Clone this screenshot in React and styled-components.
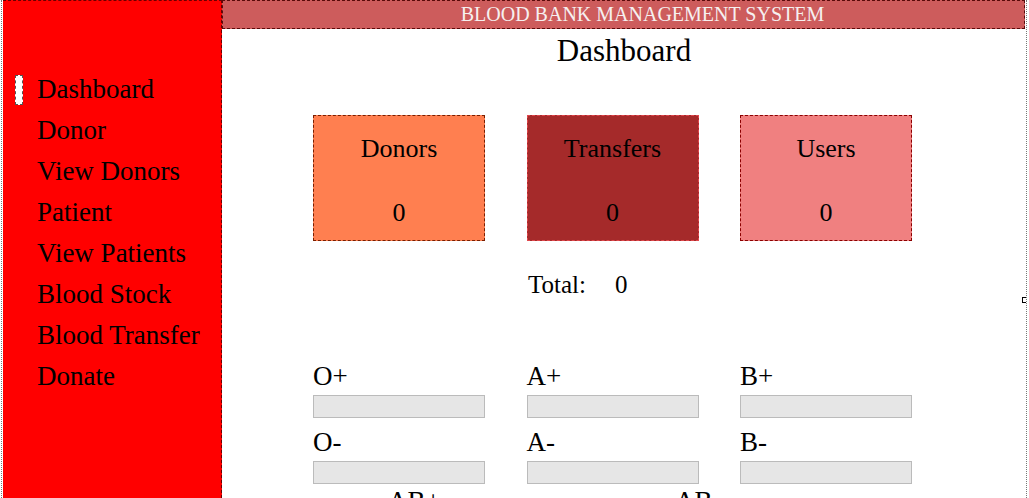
import React from "react"
import styled, { createGlobalStyle } from "styled-components"

const GlobalStyle = createGlobalStyle`
  html, body {
    margin: 0;
    overflow: hidden;
  }
  body {
    font-family: "Liberation Serif", "Times New Roman", serif;
    color: #000;
    background: #fff;
  }
`

const menu = [
  "Dashboard",
  "Donor",
  "View Donors",
  "Patient",
  "View Patients",
  "Blood Stock",
  "Blood Transfer",
  "Donate",
]

const stats = [
  { title: "Donors", value: 0, bg: "#ff7f50", line: "#7a1f00" },
  { title: "Transfers", value: 0, bg: "#a52a2a", line: "#e0474c" },
  { title: "Users", value: 0, bg: "#f08080", line: "#8b0000" },
]

const groups = [
  ["O+", "A+", "B+"],
  ["O-", "A-", "B-"],
]

const Page = styled.div`
  position: relative;
  display: flex;
  box-sizing: border-box;
  width: 1026px;
  height: 100vh;
  margin-left: 1px;
  border-left: 1px dotted #777;
  border-right: 1px dotted #777;
  overflow: hidden;
`

const Sidebar = styled.nav`
  box-sizing: border-box;
  width: 219px;
  flex-shrink: 0;
  margin-left: 1px;
  padding-top: 68px;
  background: #ff0000;
  border-top: 1px dashed #6b0000;
  border-right: 1px dashed #6b0000;
`

const MenuItem = styled.div`
  display: flex;
  align-items: center;
  height: 41px;
  padding-left: 12px;
  font-size: 27px;
  white-space: nowrap;
`

const Marker = styled.span`
  box-sizing: border-box;
  width: 8px;
  height: 30px;
  margin-right: 14px;
  background: ${(p) => (p.$active ? "#fff" : "transparent")};
  border: 1px dashed ${(p) => (p.$active ? "#555" : "transparent")};
`

const Main = styled.main`
  flex: 1;
  display: flex;
  flex-direction: column;
`

const Header = styled.header`
  box-sizing: border-box;
  height: 30px;
  margin-right: 1px;
  padding-left: 38px;
  background: #cd5c5c;
  border: 1px dashed #5a0a0a;
  color: #f6f0f0;
  font-size: 20px;
  line-height: 27px;
  text-align: center;
  text-transform: uppercase;
`

const Title = styled.h1`
  margin: 6px 0 0;
  font-size: 31px;
  font-weight: normal;
  line-height: 32px;
  text-align: center;
`

const Content = styled.section`
  width: 600px;
  margin: 0 auto;
  transform: translateX(-11px);
`

const CardRow = styled.div`
  display: grid;
  grid-template-columns: repeat(3, 172px);
  column-gap: 41.5px;
  margin-top: 48px;
`

const Card = styled.div`
  box-sizing: border-box;
  height: 126px;
  padding: 19px 0 14px;
  display: flex;
  flex-direction: column;
  justify-content: space-between;
  align-items: center;
  background: ${(p) => p.$bg};
  border: 1px dashed ${(p) => p.$line};
  font-size: 26px;
  line-height: 27px;
`

const Total = styled.div`
  display: flex;
  gap: 29px;
  margin: 30px 0 0 215px;
  font-size: 25px;
  line-height: 27px;
`

const GroupGrid = styled.div`
  display: grid;
  grid-template-columns: repeat(3, 172px);
  column-gap: 41.5px;
  row-gap: 11px;
  margin-top: 65px;
`

const LastRow = styled(GroupGrid)`
  grid-template-columns: repeat(2, 172px);
  column-gap: 115px;
  margin: 4px 0 0 75px;
`

const Group = styled.div`
  display: flex;
  flex-direction: column;
`

const GroupLabel = styled.span`
  font-size: 27px;
  line-height: 27px;
  margin-bottom: 5px;
`

const Bar = styled.div`
  box-sizing: border-box;
  height: 23px;
  background: #e6e6e6;
  border: 1px solid #bbb;
`

const EdgeHandle = styled.span`
  position: absolute;
  top: 297px;
  right: -2px;
  box-sizing: border-box;
  width: 6px;
  height: 6px;
  background: #fff;
  border: 1px solid #000;
`

const App = () => {
  return (
    <>
      <GlobalStyle />
      <Page>
        <Sidebar>
          {menu.map((item, i) => (
            <MenuItem key={item}>
              <Marker $active={i === 0} />
              {item}
            </MenuItem>
          ))}
        </Sidebar>
        <Main>
          <Header>Blood Bank Management System</Header>
          <Title>Dashboard</Title>
          <Content>
            <CardRow>
              {stats.map((s) => (
                <Card key={s.title} $bg={s.bg} $line={s.line}>
                  <span>{s.title}</span>
                  <span>{s.value}</span>
                </Card>
              ))}
            </CardRow>
            <Total>
              <span>Total:</span>
              <span>0</span>
            </Total>
            <GroupGrid>
              {groups.flat().map((g) => (
                <Group key={g}>
                  <GroupLabel>{g}</GroupLabel>
                  <Bar />
                </Group>
              ))}
            </GroupGrid>
            <LastRow>
              {["AB+", "AB-"].map((g) => (
                <Group key={g}>
                  <GroupLabel>{g}</GroupLabel>
                  <Bar />
                </Group>
              ))}
            </LastRow>
          </Content>
        </Main>
        <EdgeHandle />
      </Page>
    </>
  )
}

export default App
